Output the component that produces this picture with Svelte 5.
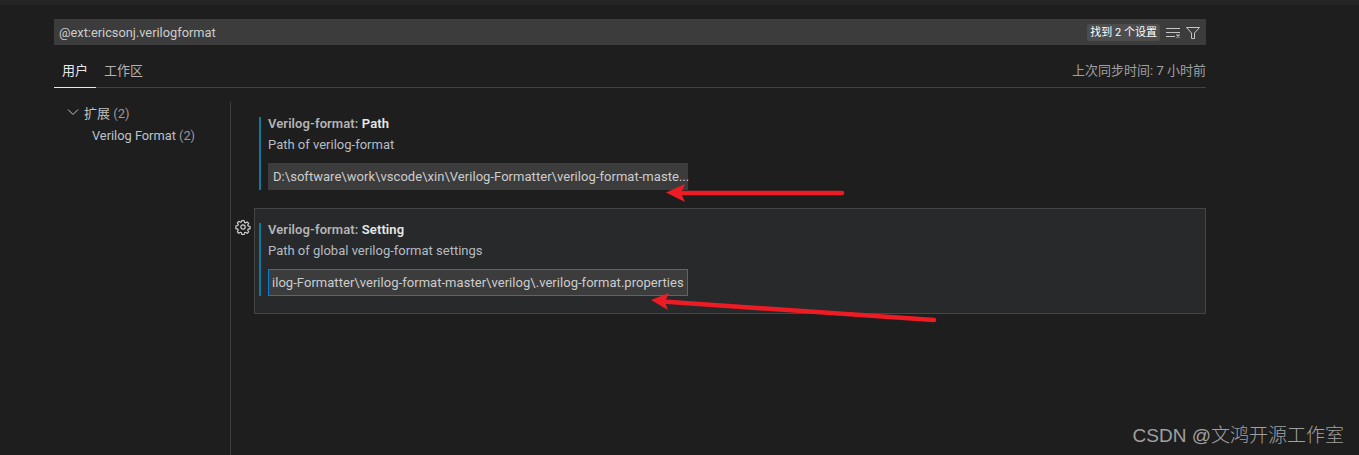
<script lang="ts">
	const settings = [
		{
			group: 'Verilog-format: ',
			name: 'Path',
			desc: 'Path of verilog-format',
			value: 'D:\\software\\work\\vscode\\xin\\Verilog-Formatter\\verilog-format-maste...',
			focused: false
		},
		{
			group: 'Verilog-format: ',
			name: 'Setting',
			desc: 'Path of global verilog-format settings',
			value: 'ilog-Formatter\\verilog-format-master\\verilog\\.verilog-format.properties',
			focused: true
		}
	];
</script>

<div class="page">
	<div class="titlebar"></div>
	<main class="editor">
		<div class="search">
			<span class="query">@ext:ericsonj.verilogformat</span>
			<span class="count">找到 2 个设置</span>
			<svg class="icon" width="16" height="16" viewBox="0 0 16 16" fill="none" stroke="#c5c5c5" aria-hidden="true">
				<path d="M1 4.500h14M1 8.500h14M1 12.500h9" />
				<path d="M11.500 10.500l3 3M14.500 10.500l-3 3" stroke-width="1.100" />
			</svg>
			<svg class="icon filter" width="16" height="16" viewBox="0 0 16 16" fill="none" stroke="#c5c5c5" aria-hidden="true">
				<path d="M1.500 3.500h13L9.500 9v5.500h-3V9z" />
			</svg>
		</div>

		<div class="tabs">
			<span class="tab active">用户</span>
			<span class="tab">工作区</span>
			<span class="sync">上次同步时间: 7 小时前</span>
		</div>

		<div class="body">
			<nav class="tree">
				<div class="tree-row">
					<svg width="12" height="12" viewBox="0 0 12 12" fill="none" stroke="#c5c5c5" aria-hidden="true">
						<path d="M1 3.500l5 5 5-5" />
					</svg>
					<span>扩展 <em>(2)</em></span>
				</div>
				<div class="tree-row child">Verilog Format <em>(2)</em></div>
			</nav>

			<section class="list">
				{#each settings as s}
					<article class="setting" class:focused={s.focused}>
						{#if s.focused}
							<svg class="gear" width="16" height="16" viewBox="0 0 16 16" fill="none" stroke="#d0d0d0" stroke-width="1.200" aria-hidden="true">
								<path d="M6.900 1.500h2.200l.4 1.900 1.100.5 1.600-1 1.500 1.500-1 1.600.5 1.100 1.900.4v2.200l-1.900.4-.5 1.100 1 1.600-1.500 1.500-1.600-1-1.100.5-.4 1.900H6.900l-.4-1.900-1.100-.5-1.600 1-1.500-1.500 1-1.600-.5-1.100-1.900-.4V6.900l1.900-.4.5-1.100-1-1.600 1.500-1.500 1.600 1 1.100-.5z" stroke-linejoin="round" />
								<circle cx="8" cy="8" r="2.200" />
							</svg>
						{/if}
						<div class="inner">
							<div class="title">{s.group}<b>{s.name}</b></div>
							<div class="desc">{s.desc}</div>
							<div class="input">{s.value}</div>
						</div>
					</article>
				{/each}
			</section>
		</div>
	</main>

	<svg class="arrows" width="1359" height="455" viewBox="0 0 1359 455" aria-hidden="true">
		<path d="M680 193H842" stroke="#ed1c24" stroke-width="4.500" stroke-linecap="round" />
		<path d="M666 192.500l19-8.500-4 9 4 9z" fill="#ed1c24" />
		<path d="M663 301.500L934 320" stroke="#ed1c24" stroke-width="4.500" stroke-linecap="round" />
		<path d="M651 300l18-7-4 8.500 3 8.500z" fill="#ed1c24" />
	</svg>
	<div class="watermark">CSDN @文鸿开源工作室</div>
</div>

<style>
	:global(body) {
		margin: 0;
		background: #1e1e1e;
		overflow: hidden;
	}

	.page {
		position: relative;
		width: 1359px;
		height: 455px;
		overflow: hidden;
		background: #1e1e1e;
		color: #cccccc;
		font-family: Roboto, "Noto Sans CJK SC", sans-serif;
		font-size: 13px;
	}

	.titlebar {
		height: 5px;
		background: #252526;
	}

	.editor {
		width: 1152px;
		margin-left: 54px;
		padding-top: 14px;
	}

	.search {
		display: flex;
		align-items: center;
		height: 26px;
		padding: 0 5px;
		background: #3c3c3c;
		box-sizing: border-box;
	}

	.query {
		flex: 1;
		color: #cccccc;
		font-size: 12.8px;
	}

	.count {
		padding: 1px 3px;
		border-radius: 2px;
		background: #4d4d4d;
		color: #ffffff;
		font-size: 11px;
		line-height: 15px;
		margin-right: 5px;
	}

	.icon {
		display: block;
	}

	.filter {
		margin-left: 4px;
	}

	.tabs {
		display: flex;
		align-items: center;
		height: 43px;
		border-bottom: 1px solid #424242;
		box-sizing: border-box;
	}

	.tab {
		display: flex;
		align-items: center;
		height: 100%;
		padding: 6px 8px 0;
		color: #b3b3b3;
		box-sizing: border-box;
	}

	.tab.active {
		color: #e7e7e7;
		border-bottom: 1px solid #e7e7e7;
		height: calc(100% + 1px);
		margin-bottom: -1px;
	}

	.sync {
		margin-left: auto;
		padding-top: 6px;
		color: #a0a0a0;
	}

	.body {
		display: flex;
		margin-top: 14px;
		height: 353px;
	}

	.tree {
		width: 177px;
		box-sizing: border-box;
		padding-left: 13px;
		border-right: 1px solid #3f3f3f;
	}

	.tree-row {
		display: flex;
		align-items: center;
		gap: 5px;
		height: 20px;
		color: #c0c0c0;
	}

	.tree-row.child {
		display: block;
		height: 22px;
		margin-top: 3px;
		line-height: 22px;
		padding-left: 25px;
		color: #b9c3cc;
		font-size: 12.8px;
	}

	.tree em {
		font-style: normal;
		color: #999999;
	}

	.list {
		flex: 1;
		padding-left: 23px;
		min-width: 0;
	}

	.setting {
		position: relative;
		box-sizing: border-box;
		height: 106px;
		padding: 14px 14px 0 4px;
		border: 1px solid transparent;
	}

	.setting.focused {
		border-color: #454545;
		background: #27292b;
	}

	.gear {
		position: absolute;
		left: -20px;
		top: 10px;
	}

	.inner {
		border-left: 2px solid #0e7a9f;
		padding-left: 7px;
		height: 73px;
	}

	.title {
		line-height: 14px;
		font-weight: 600;
		color: #b4b4b4;
		font-size: 13px;
		letter-spacing: 0.1px;
	}

	.title b {
		color: #e7e7e7;
		font-weight: 600;
	}

	.desc {
		margin-top: 3px;
		line-height: 22px;
		color: #b6bcc2;
		font-size: 13px;
	}

	.input {
		display: flex;
		align-items: center;
		width: 420px;
		height: 27px;
		margin-top: 7px;
		padding: 0 4px;
		background: #3c3c3c;
		color: #cccccc;
		box-sizing: border-box;
		white-space: nowrap;
		border: 1px solid transparent;
		letter-spacing: 0.04px;
	}

	.focused .input {
		border-color: #007fd4;
		padding-left: 3px;
	}

	.arrows {
		position: absolute;
		left: 0;
		top: 0;
		pointer-events: none;
	}

	.watermark {
		position: absolute;
		right: 15px;
		bottom: 8px;
		font-size: 19px;
		font-weight: 300;
		color: #a0a0a0;
		font-family: "Liberation Sans", "Noto Sans CJK SC", sans-serif;
	}
</style>
